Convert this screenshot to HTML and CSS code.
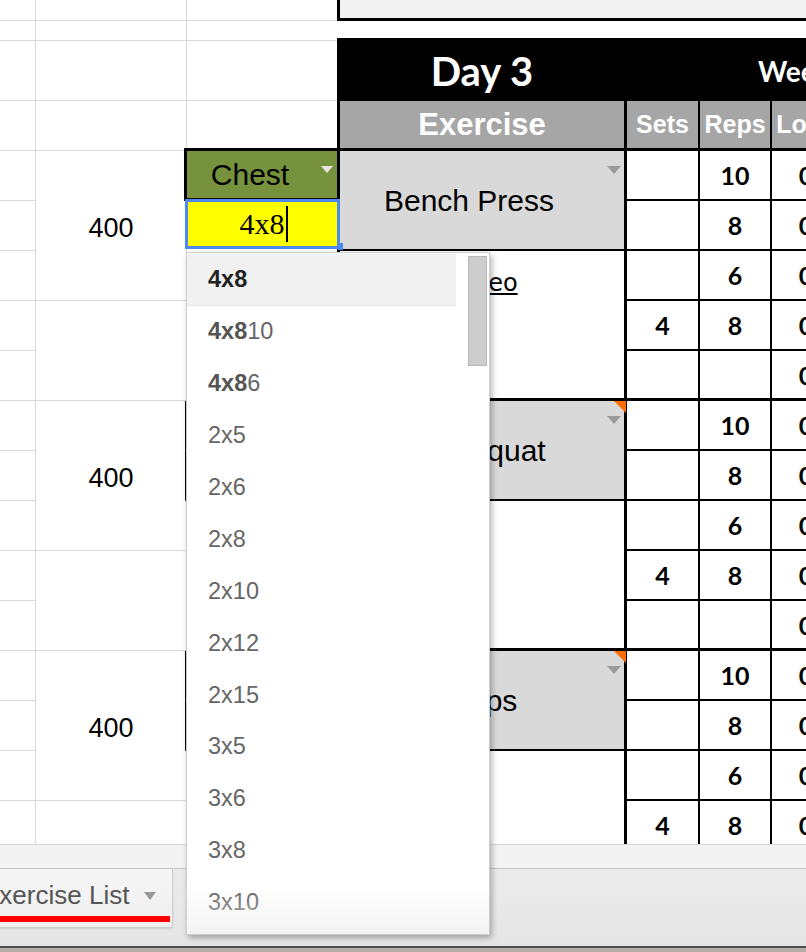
FILE: index.html
```html
<!DOCTYPE html>
<html>
<head>
<meta charset="utf-8">
<link rel="stylesheet" href="styles.css">
</head>
<body>
<div class="sheet">
  <!-- r0 -->
  <div class="g"></div><div class="g"></div><div class="g nr"></div><div class="topbox"></div>
  <!-- r1 -->
  <div class="g"></div><div class="g"></div><div class="g nr"></div><div class="gapbar"></div>
  <!-- r2 -->
  <div class="g"></div><div class="g"></div><div class="g nr"></div><div class="day">Day 3</div><div class="week">Week 1</div>
  <!-- r3 -->
  <div class="g"></div><div class="g"></div><div class="g nr"></div>
  <div class="hd hd-ex">Exercise</div><div class="hd hd-num">Sets</div><div class="hd hd-num">Reps</div><div class="hd hd-num">Load</div>

  <!-- group 1 -->
  <div class="g"></div><div class="g val span3">400</div><div class="cat">Chest</div><div class="ex ex-gray">Bench Press</div><div class="n"></div><div class="n">10</div><div class="n">0</div>
  <div class="g"></div><div class="edit">4x8<span class="caret"></span></div><div class="n"></div><div class="n">8</div><div class="n">0</div>
  <div class="g"></div><div class="g"></div><div class="ex ex-white"><a class="link">Video</a></div><div class="n"></div><div class="n">6</div><div class="n">0</div>
  <div class="g"></div><div class="g span2"></div><div class="g"></div><div class="n">4</div><div class="n">8</div><div class="n">0</div>
  <div class="g"></div><div class="g"></div><div class="n end"></div><div class="n end"></div><div class="n end">0</div>

  <!-- group 2 -->
  <div class="g"></div><div class="g val span3">400</div><div class="g cat-edge"></div><div class="ex ex-gray note">Back Squat</div><div class="n"></div><div class="n">10</div><div class="n">0</div>
  <div class="g"></div><div class="g cat-edge"></div><div class="n"></div><div class="n">8</div><div class="n">0</div>
  <div class="g"></div><div class="g"></div><div class="ex ex-white"></div><div class="n"></div><div class="n">6</div><div class="n">0</div>
  <div class="g"></div><div class="g span2"></div><div class="g"></div><div class="n">4</div><div class="n">8</div><div class="n">0</div>
  <div class="g"></div><div class="g"></div><div class="n end"></div><div class="n end"></div><div class="n end">0</div>

  <!-- group 3 -->
  <div class="g"></div><div class="g val span3">400</div><div class="g cat-edge"></div><div class="ex ex-gray note">Sit Ups</div><div class="n"></div><div class="n">10</div><div class="n">0</div>
  <div class="g"></div><div class="g cat-edge"></div><div class="n"></div><div class="n">8</div><div class="n">0</div>
  <div class="g"></div><div class="g"></div><div class="ex ex-white"></div><div class="n"></div><div class="n">6</div><div class="n">0</div>
  <div class="g"></div><div class="g span2"></div><div class="g"></div><div class="n">4</div><div class="n">8</div><div class="n">0</div>
  <div class="g"></div><div class="g"></div><div class="n end"></div><div class="n end"></div><div class="n end">0</div>
</div>

<div class="hscroll"></div>
<div class="tabbar">
  <div class="tab"><span class="tab-label">Exercise List</span><span class="tab-arrow"></span></div>
</div>
<div class="bottom"></div>

<div class="dd">
  <div class="dd-list">
    <div class="dd-item hl">4x8</div>
    <div class="dd-item"><b>4x8</b>10</div>
    <div class="dd-item"><b>4x8</b>6</div>
    <div class="dd-item">2x5</div>
    <div class="dd-item">2x6</div>
    <div class="dd-item">2x8</div>
    <div class="dd-item">2x10</div>
    <div class="dd-item">2x12</div>
    <div class="dd-item">2x15</div>
    <div class="dd-item">3x5</div>
    <div class="dd-item">3x6</div>
    <div class="dd-item">3x8</div>
    <div class="dd-item">3x10</div>
  </div>
  <div class="dd-track"><div class="dd-thumb"></div></div>
</div>
</body>
</html>
```

FILE: styles.css
```css
* { box-sizing: border-box; }
html, body { margin: 0; padding: 0; }
body {
  width: 806px;
  height: 952px;
  overflow: hidden;
  position: relative;
  background: #fff;
  font-family: "Liberation Sans", Arial, sans-serif;
  color: #000;
}

.sheet {
  height: 844px;
  overflow: hidden;
  display: grid;
  grid-template-columns: 36px 151px 150px 290px 73px 72px 70px;
  grid-template-rows: 21px 20px 60px 50px;
  grid-auto-rows: 50px;
}

.g {
  border-right: 1px solid #d9d9d9;
  border-bottom: 1px solid #d9d9d9;
}
.g.nr { border-right: none; }
.span2 { grid-row: span 2; }
.span3 { grid-row: span 3; }

.val {
  display: flex;
  align-items: center;
  justify-content: center;
  font-size: 27px;
  padding-top: 5px;
}

.topbox {
  grid-column: span 4;
  background: #f3f3f3;
  border-left: 3px solid #000;
  border-bottom: 3px solid #000;
}
.gapbar {
  grid-column: span 4;
  border-bottom: 3px solid #000;
}

.day, .week {
  background: #000;
  color: #fff;
  font-family: Lato, "Open Sans", sans-serif;
  font-weight: 700;
  display: flex;
  align-items: center;
}
.day {
  justify-content: center;
  font-size: 40px;
}
.week {
  grid-column: span 3;
  font-size: 28px;
  padding-left: 131px;
  white-space: nowrap;
}

.hd {
  background: #a6a6a6;
  color: #fff;
  font-weight: bold;
  border-bottom: 3px solid #000;
  display: flex;
  align-items: center;
  justify-content: center;
}
.hd-ex {
  font-size: 31px;
  border-left: 3px solid #000;
  border-right: 3px solid #000;
}
.hd-num {
  font-size: 25px;
  border-right: 2px solid #000;
}

.cat {
  margin: -3px 0 0 -3px;
  border: 3px solid #000;
  border-right: none;
  background: #76923c;
  font-size: 30px;
  display: flex;
  align-items: center;
  justify-content: center;
  padding-right: 24px;
  position: relative;
}
.cat::after {
  content: "";
  position: absolute;
  right: 4px;
  top: 15px;
  border-left: 6px solid transparent;
  border-right: 6px solid transparent;
  border-top: 7px solid #e4e4e4;
}

.cat-edge {
  margin-left: -2px;
  border-left: 2px solid #000;
}

.edit {
  margin: -2px -3px 2px -2px;
  border: 3px solid #4a89f0;
  background: #ffff00;
  font-family: "Liberation Serif", "Times New Roman", serif;
  font-size: 30px;
  display: flex;
  align-items: center;
  justify-content: center;
  position: relative;
  z-index: 2;
  padding-left: 2px;
}
.edit::after {
  content: "";
  position: absolute;
  right: -6px;
  bottom: -4px;
  width: 5px;
  height: 7px;
  background: #4a89f0;
}
.caret {
  display: inline-block;
  width: 2px;
  height: 36px;
  background: #000;
  margin-left: 1px;
}

.ex {
  border-left: 3px solid #000;
  border-right: 3px solid #000;
  position: relative;
}
.ex-gray {
  grid-row: span 2;
  background: #d9d9d9;
  border-bottom: 2px solid #000;
  font-size: 30px;
  display: flex;
  align-items: center;
  justify-content: center;
  padding-right: 26px;
  padding-top: 2px;
}
.ex-gray::after {
  content: "";
  position: absolute;
  right: 3px;
  top: 15px;
  border-left: 7px solid transparent;
  border-right: 7px solid transparent;
  border-top: 8px solid #9a9a9a;
}
.note::before {
  content: "";
  position: absolute;
  right: -2px;
  top: 0;
  border-top: 12px solid #ff6d00;
  border-left: 12px solid transparent;
}
.ex-white {
  grid-row: span 3;
  background: #fff;
  border-bottom: 3px solid #000;
  display: flex;
  justify-content: center;
  align-items: flex-start;
  padding-top: 18px;
}
.link {
  font-family: "DejaVu Sans", Verdana, sans-serif;
  font-size: 24px;
  color: #000;
  text-decoration: underline;
  padding-left: 4px;
}

.n {
  border-right: 2px solid #000;
  border-bottom: 2px solid #000;
  font-family: Lato, "Open Sans", sans-serif;
  font-weight: 700;
  font-size: 25px;
  display: flex;
  align-items: center;
  justify-content: center;
}
.n.end { border-bottom-width: 3px; }

/* bottom chrome */
.hscroll {
  height: 24px;
  background: #f3f3f3;
  border-top: 1px solid #d6d6d6;
}
.tabbar {
  height: 80px;
  background: linear-gradient(#ebebeb, #e6e6e6);
  border-top: 1px solid #c6c6c6;
  border-bottom: 2px solid #4d4d4d;
  display: flex;
  align-items: flex-start;
}
.tab {
  margin-left: -18px;
  height: 59px;
  width: 191px;
  background: linear-gradient(#f6f6f6, #efefef);
  border-right: 1px solid #cdcdcd;
  border-bottom: 1px solid #cdcdcd;
  border-bottom-right-radius: 3px;
  box-shadow: 0 1px 2px rgba(0, 0, 0, 0.12);
  display: flex;
  align-items: center;
  padding-bottom: 5px;
  position: relative;
  color: #555;
  font-size: 26px;
  white-space: nowrap;
}
.tab::after {
  content: "";
  position: absolute;
  left: 0;
  right: 2px;
  bottom: 5px;
  height: 6px;
  background: #ff0000;
}
.tab-arrow {
  margin-left: 15px;
  border-left: 6px solid transparent;
  border-right: 6px solid transparent;
  border-top: 8px solid #999;
}
.bottom {
  height: 4px;
  background: #b2afab;
}

/* dropdown */
.dd {
  position: absolute;
  left: 186px;
  top: 252px;
  width: 304px;
  height: 683px;
  background: #fff;
  border: 1px solid #cdcdcd;
  box-shadow: 2px 3px 6px rgba(0, 0, 0, 0.3);
  display: flex;
  overflow: hidden;
  z-index: 5;
}
.dd::after {
  content: "";
  position: absolute;
  left: 0;
  right: 0;
  bottom: 0;
  height: 45px;
  background: linear-gradient(rgba(240, 240, 240, 0), rgba(238, 238, 238, 0.7));
}
.dd-list {
  width: 269px;
  padding-top: 1px;
  flex: none;
}
.dd-item {
  height: 51.9px;
  padding-left: 21px;
  display: flex;
  align-items: center;
  font-size: 23.5px;
  color: #666;
}
.dd-item b { font-weight: bold; color: #555; }
.dd-item.hl {
  background: #f1f1f1;
  border-bottom: 1px solid #e4e4e4;
  color: #222;
  font-weight: bold;
}
.dd-track {
  flex: 1;
  padding: 3px 0 0 12px;
}
.dd-thumb {
  width: 19px;
  height: 110px;
  background: #cccccc;
  border: 1px solid #b8b8b8;
}
```
